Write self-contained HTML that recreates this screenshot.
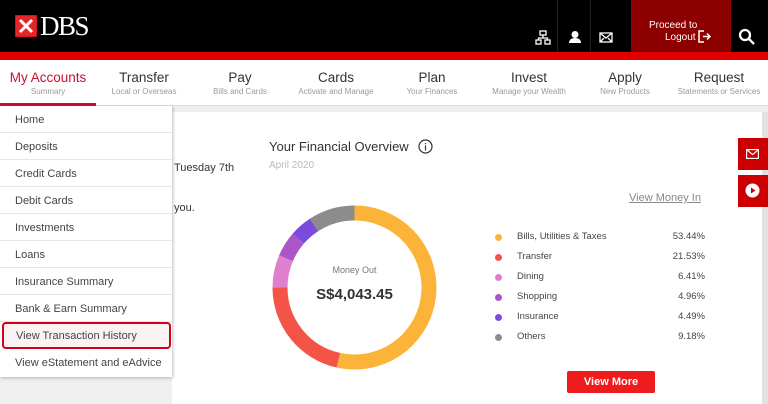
<!DOCTYPE html>
<html><head><meta charset="utf-8"><style>
*{margin:0;padding:0;box-sizing:border-box}
body{width:768px;height:404px;overflow:hidden;background:#efefef;font-family:"Liberation Sans",sans-serif;position:relative}
.hdr{position:absolute;left:0;top:0;width:768px;height:52px;background:#000}
.band{position:absolute;left:0;top:52px;width:768px;height:8px;background:#e00000}
.nav{position:absolute;left:0;top:60px;width:768px;height:46px;background:#fff;border-bottom:1px solid #ddd}
.ni{position:absolute;top:10px;text-align:center;width:110px}
.ni b{display:block;font-weight:normal;font-size:13.5px;color:#333;line-height:16px}
.ni i{display:block;font-style:normal;font-size:8px;color:#999;line-height:11px}
.card{position:absolute;left:172px;top:112px;width:590px;height:292px;background:#fff}
.menu{position:absolute;left:0;top:106px;width:172px;height:271px;background:#fff;box-shadow:1px 1px 3px rgba(0,0,0,.25)}
.menu div{height:27px;border-bottom:1px solid #e6e6e6;font-size:11px;color:#444;padding:8px 0 0 15px}
.lg{position:absolute;left:495px;font-size:9.5px;color:#444;width:210px}
.lg span{position:absolute;left:0;top:3px;width:7px;height:7px;border-radius:50%}
.lg em{font-style:normal;position:absolute;left:22px}
.lg u{text-decoration:none;position:absolute;right:0}
</style></head><body>
<div class="hdr">
 <svg style="position:absolute;left:15px;top:15px" width="22" height="22" viewBox="0 0 22 22"><rect width="22" height="22" fill="#e8242b"/><path d="M5 5L17 17M17 5L5 17" stroke="#fff" stroke-width="3"/><rect x="0" y="0" width="22" height="22" fill="none" stroke="#b00" stroke-width="1"/></svg>
 <div style="position:absolute;left:40px;top:11px;color:#fff;font-family:'Liberation Serif',serif;font-size:27px;letter-spacing:-1.5px">DBS</div>
 <svg style="position:absolute;left:535px;top:30px" width="16" height="15" viewBox="0 0 16 15" fill="none" stroke="#fff" stroke-width="1.3"><rect x="5" y="1" width="6" height="4"/><rect x="1" y="10" width="5" height="4"/><rect x="10" y="10" width="5" height="4"/><path d="M8 5v3M3.5 10V8h9v2"/></svg>
 <div style="position:absolute;left:557px;top:0;width:1px;height:52px;background:#222"></div>
 <svg style="position:absolute;left:568px;top:30px" width="14" height="14" viewBox="0 0 14 14" fill="#fff"><circle cx="7" cy="4.5" r="3.5"/><path d="M1 13c0-3 2-5 6-5s6 2 6 5z"/></svg>
 <div style="position:absolute;left:590px;top:0;width:1px;height:52px;background:#222"></div>
 <svg style="position:absolute;left:599px;top:32px" width="14" height="11" viewBox="0 0 14 11" fill="none" stroke="#fff" stroke-width="1.3"><rect x="1" y="1" width="12" height="9"/><path d="M1 1l6 5 6-5M1 10l4-4M13 10l-4-4"/></svg>
 <div style="position:absolute;left:631px;top:0;width:100px;height:52px;background:#8c0000;color:#fff;font-size:10px;line-height:12px">
  <div style="position:absolute;left:18px;top:20px">Proceed to</div>
  <div style="position:absolute;left:34px;top:32px">Logout</div>
  <svg style="position:absolute;left:67px;top:30px" width="14" height="13" viewBox="0 0 14 13" fill="none" stroke="#fff" stroke-width="1.5"><path d="M6 1H1v11h5"/><path d="M5 6.5h7M9 3.5l3 3-3 3"/></svg>
 </div>
 <svg style="position:absolute;left:738px;top:28px" width="18" height="18" viewBox="0 0 18 18" fill="none" stroke="#fff" stroke-width="2.3"><circle cx="7" cy="7" r="5"/><path d="M11 11l5 5"/></svg>
</div>
<div class="band"></div>
<div class="nav">
 <div class="ni" style="left:-7px"><b style="color:#c8102e">My Accounts</b><i>Summary</i></div>
 <div style="position:absolute;left:0;top:43px;width:96px;height:4px;background:#c8102e"></div>
 <div class="ni" style="left:89px"><b>Transfer</b><i>Local or Overseas</i></div>
 <div class="ni" style="left:185px"><b>Pay</b><i>Bills and Cards</i></div>
 <div class="ni" style="left:281px"><b>Cards</b><i>Activate and Manage</i></div>
 <div class="ni" style="left:377px"><b>Plan</b><i>Your Finances</i></div>
 <div class="ni" style="left:474px"><b>Invest</b><i>Manage your Wealth</i></div>
 <div class="ni" style="left:570px"><b>Apply</b><i>New Products</i></div>
 <div class="ni" style="left:664px"><b>Request</b><i>Statements or Services</i></div>
</div>
<div class="card">
 <div style="position:absolute;left:2px;top:50px;font-size:11px;color:#333">Tuesday 7th</div>
 <div style="position:absolute;left:2px;top:90px;font-size:11px;color:#333">you.</div>
 <div style="position:absolute;left:97px;top:27px;font-size:13px;color:#333">Your Financial Overview</div>
 <svg style="position:absolute;left:246px;top:27px" width="15" height="15" viewBox="0 0 15 15" fill="none" stroke="#333" stroke-width="1.2"><circle cx="7.5" cy="7.5" r="6.5"/><path d="M7.5 6.5v5M7.5 4v1.2"/></svg>
 <div style="position:absolute;left:97px;top:48px;font-size:10px;color:#bbb">April 2020</div>
 <div style="position:absolute;left:457px;top:80px;font-size:11px;color:#888;text-decoration:underline">View Money In</div>
</div>
<svg style="position:absolute;left:272px;top:205px" width="165" height="165" viewBox="0 0 165 165">
 <g transform="rotate(-90 82.5 82.5)" fill="none" stroke-width="15">
  <circle cx="82.5" cy="82.5" r="74.5" stroke="#fbb33a" stroke-dasharray="250.2 500" stroke-dashoffset="0"/>
  <circle cx="82.5" cy="82.5" r="74.5" stroke="#f45348" stroke-dasharray="100.8 500" stroke-dashoffset="-250.2"/>
  <circle cx="82.5" cy="82.5" r="74.5" stroke="#e07fd0" stroke-dasharray="30 500" stroke-dashoffset="-351"/>
  <circle cx="82.5" cy="82.5" r="74.5" stroke="#ab55c8" stroke-dasharray="23.2 500" stroke-dashoffset="-381"/>
  <circle cx="82.5" cy="82.5" r="74.5" stroke="#7b4be0" stroke-dasharray="21 500" stroke-dashoffset="-404.2"/>
  <circle cx="82.5" cy="82.5" r="74.5" stroke="#8c8c8c" stroke-dasharray="43 500" stroke-dashoffset="-425.2"/>
 </g>
 <text x="82.5" y="68" text-anchor="middle" font-size="9" fill="#777" font-family="Liberation Sans">Money Out</text>
 <text x="82.5" y="94" text-anchor="middle" font-size="15" font-weight="bold" fill="#333" font-family="Liberation Sans">S$4,043.45</text>
</svg>
<div class="lg" style="top:231px"><span style="background:#fbb33a"></span><em>Bills, Utilities &amp; Taxes</em><u>53.44%</u></div>
<div class="lg" style="top:251px"><span style="background:#f45348"></span><em>Transfer</em><u>21.53%</u></div>
<div class="lg" style="top:271px"><span style="background:#e07fd0"></span><em>Dining</em><u>6.41%</u></div>
<div class="lg" style="top:291px"><span style="background:#ab55c8"></span><em>Shopping</em><u>4.96%</u></div>
<div class="lg" style="top:311px"><span style="background:#7b4be0"></span><em>Insurance</em><u>4.49%</u></div>
<div class="lg" style="top:331px"><span style="background:#8c8c8c"></span><em>Others</em><u>9.18%</u></div>
<div style="position:absolute;left:567px;top:371px;width:88px;height:22px;background:#ee1c1c;border-radius:2px;color:#fff;font-size:11px;font-weight:bold;text-align:center;line-height:22px">View More</div>
<div style="position:absolute;left:762px;top:112px;width:6px;height:292px;background:#e2e2e2"></div>
<div style="position:absolute;left:738px;top:138px;width:30px;height:32px;background:#c00"><svg style="position:absolute;left:8px;top:11px" width="13" height="10" viewBox="0 0 13 10" fill="none" stroke="#fff" stroke-width="1.2"><rect x=".6" y=".6" width="11.8" height="8.8"/><path d="M.6.6l6 5 6-5"/></svg></div>
<div style="position:absolute;left:738px;top:175px;width:30px;height:32px;background:#c00"><svg style="position:absolute;left:7px;top:8px" width="15" height="15" viewBox="0 0 15 15"><circle cx="7.5" cy="7.5" r="7" fill="#fff"/><path d="M6 4.5v6l4.5-3z" fill="#c00"/></svg></div>
<div class="menu">
 <div>Home</div><div>Deposits</div><div>Credit Cards</div><div>Debit Cards</div><div>Investments</div><div>Loans</div><div>Insurance Summary</div><div>Bank &amp; Earn Summary</div>
 <div style="border:2px solid #d0021b;border-radius:4px;background:#fbf3f3;margin:0 0 0 2px;width:169px;padding:6px 0 0 12px">View Transaction History</div>
 <div style="border-bottom:none">View eStatement and eAdvice</div>
</div>
</body></html>
